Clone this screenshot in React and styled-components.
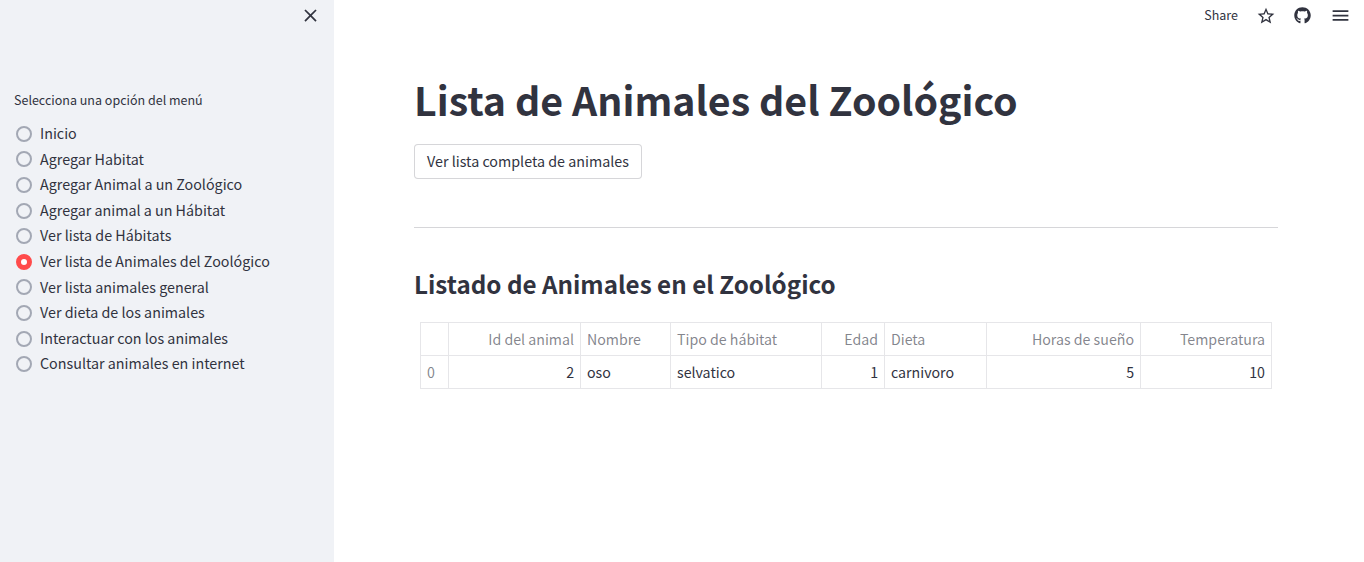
import styled, { createGlobalStyle } from 'styled-components';
import { FaGithub } from 'react-icons/fa';
import { MdClose, MdMenu, MdStarBorder } from 'react-icons/md';

const options = [
  'Inicio',
  'Agregar Habitat',
  'Agregar Animal a un Zoológico',
  'Agregar animal a un Hábitat',
  'Ver lista de Hábitats',
  'Ver lista de Animales del Zoológico',
  'Ver lista animales general',
  'Ver dieta de los animales',
  'Interactuar con los animales',
  'Consultar animales en internet',
];

const columns = [
  { title: '', width: 28, value: '0', index: true },
  { title: 'Id del animal', width: 132, value: '2', right: true },
  { title: 'Nombre', width: 90, value: 'oso' },
  { title: 'Tipo de hábitat', width: 151, value: 'selvatico' },
  { title: 'Edad', width: 63, value: '1', right: true },
  { title: 'Dieta', width: 102, value: 'carnivoro' },
  { title: 'Horas de sueño', width: 154, value: '5', right: true },
  { title: 'Temperatura', width: 131, value: '10', right: true },
];

const App = () => {
  return (
    <>
      <GlobalStyle />
      <Page>
        <Sidebar>
          <CloseRow>
            <MdClose size={21} />
          </CloseRow>
          <MenuLabel>Selecciona una opción del menú</MenuLabel>
          <RadioList>
            {options.map((option, i) => (
              <RadioRow key={option}>
                <Radio $active={i === 5} />
                <span>{option}</span>
              </RadioRow>
            ))}
          </RadioList>
        </Sidebar>

        <Main>
          <Toolbar>
            <ShareText>Share</ShareText>
            <MdStarBorder size={20} />
            <FaGithub size={17} />
            <MenuIcon size={21} />
          </Toolbar>

          <Content>
            <Title>Lista de Animales del Zoológico</Title>
            <Button>Ver lista completa de animales</Button>
            <Divider />
            <Subtitle>Listado de Animales en el Zoológico</Subtitle>
            <Table>
              <colgroup>
                {columns.map((col, i) => (
                  <col key={i} width={col.width} />
                ))}
              </colgroup>
              <thead>
                <tr>
                  {columns.map((col, i) => (
                    <HeadCell key={i} $right={col.right}>{col.title}</HeadCell>
                  ))}
                </tr>
              </thead>
              <tbody>
                <tr>
                  {columns.map((col, i) => (
                    <BodyCell key={i} $right={col.right} $index={col.index}>
                      {col.value}
                    </BodyCell>
                  ))}
                </tr>
              </tbody>
            </Table>
          </Content>
        </Main>
      </Page>
    </>
  );
};

const GlobalStyle = createGlobalStyle`
  html, body {
    margin: 0;
    padding: 0;
    background: #fff;
  }

  body {
    font-family: "Noto Sans CJK SC", "Noto Sans", sans-serif;
    color: #31333f;
    overflow: hidden;
  }
`;

const Page = styled.div`
  display: flex;
  width: 1364px;
  height: 562px;
`;

const Sidebar = styled.aside`
  width: 334px;
  flex-shrink: 0;
  background: #f0f2f6;
  padding: 5px 13px 0 14px;
  box-sizing: border-box;
`;

const CloseRow = styled.div`
  display: flex;
  justify-content: flex-end;
  height: 21px;
  color: #31333f;
`;

const MenuLabel = styled.div`
  margin-top: 65px;
  font-size: 12.5px;
  line-height: 18px;
`;

const RadioList = styled.div`
  margin-top: 10.7px;
  display: flex;
  flex-direction: column;
`;

const RadioRow = styled.label`
  display: flex;
  align-items: center;
  gap: 8px;
  height: 25.6px;
  padding-left: 2px;
  font-size: 14.3px;
`;

const Radio = styled.span`
  width: 16px;
  height: 16px;
  margin-top: 2.6px;
  border-radius: 50%;
  box-sizing: border-box;
  background: ${(p) => (p.$active ? '#fff' : '#f0f2f6')};
  border: ${(p) => (p.$active ? '5px solid #ff4b4b' : '2px solid #a3a8b4')};
`;

const Main = styled.main`
  flex: 1;
  display: flex;
  flex-direction: column;
`;

const Toolbar = styled.header`
  display: flex;
  align-items: center;
  justify-content: flex-end;
  height: 31px;
  gap: 18px;
  padding-right: 13px;
  color: #31333f;
`;

const ShareText = styled.span`
  font-size: 12.5px;
  padding-bottom: 2px;
`;

const MenuIcon = styled(MdMenu)`
  margin-left: 1px;
`;

const Content = styled.div`
  padding: 37px 86px 0 80px;
`;

const Title = styled.h1`
  margin: 0;
  font-size: 39.3px;
  line-height: 62px;
  font-weight: 700;
`;

const Button = styled.button`
  display: block;
  margin-top: 14px;
  width: 228px;
  height: 35px;
  padding: 0 0 2px;
  background: #fff;
  border: 1px solid rgba(49, 51, 63, 0.2);
  border-radius: 4px;
  font-family: inherit;
  font-size: 14.3px;
  color: #31333f;
`;

const Divider = styled.hr`
  margin: 48px 0 0;
  border: 0;
  border-bottom: 1px solid rgba(49, 51, 63, 0.2);
`;

const Subtitle = styled.h2`
  margin: 36px 0 0;
  font-size: 24.2px;
  line-height: 40px;
  font-weight: 600;
`;

const Table = styled.table`
  margin: 18px 0 0 6px;
  width: 852px;
  border-collapse: collapse;
  table-layout: fixed;
  font-size: 14.2px;
`;

const HeadCell = styled.th`
  height: 33px;
  padding: 0 6px;
  box-sizing: border-box;
  border: 1px solid #e6e6e9;
  font-weight: 400;
  color: rgba(49, 51, 63, 0.6);
  text-align: ${(p) => (p.$right ? 'right' : 'left')};
  white-space: nowrap;
`;

const BodyCell = styled.td`
  height: 33px;
  padding: 0 6px;
  box-sizing: border-box;
  border: 1px solid #e6e6e9;
  color: ${(p) => (p.$index ? 'rgba(49, 51, 63, 0.6)' : '#31333f')};
  text-align: ${(p) => (p.$right ? 'right' : 'left')};
  white-space: nowrap;
`;

export default App;
